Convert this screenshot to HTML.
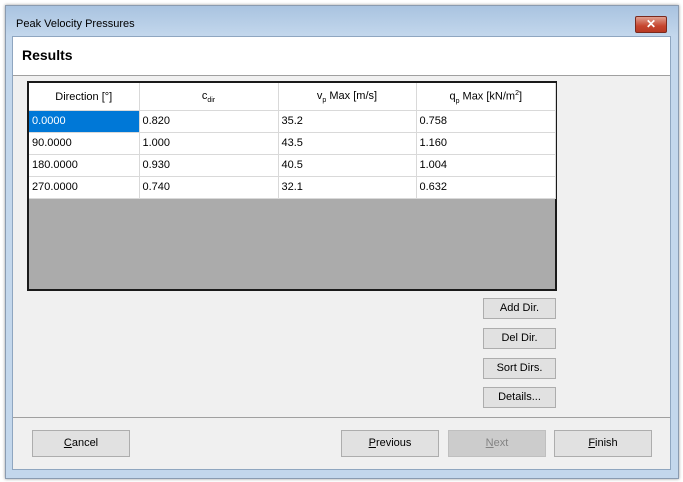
<!DOCTYPE html><html><head><style>
*{margin:0;padding:0;box-sizing:border-box}
body{width:683px;height:482px;background:#fff;font-family:"Liberation Sans",sans-serif;font-size:11px;position:relative;overflow:hidden}
.a{position:absolute}
.btn{position:absolute;background:#e1e1e1;border:1px solid #adadad;text-align:center;color:#000;font-size:11px}
td{border-right:1px solid #d9d9d9;border-bottom:1px solid #d9d9d9;padding:0 3px;height:22px;font-size:11px}
</style></head><body>
<div class="a" style="left:5px;top:5px;width:674px;height:474px;border:1px solid #8a9bb0;background:linear-gradient(#a9c3e0,#c3d7ec 30px,#c3d7ec);box-shadow:0 0 3px #999"></div>
<div class="a" style="left:16px;top:18px;font-size:11px;color:#000">Peak Velocity Pressures</div>
<div class="a" style="left:635px;top:16px;width:32px;height:17px;background:linear-gradient(#e0a090,#c6452e 60%,#b83a24);border:1px solid #7a2a1e;border-radius:2px;color:#fff;font-weight:bold;text-align:center;line-height:15px;font-size:12px">✕</div>
<div class="a" style="left:12px;top:36px;width:659px;height:434px;background:#f0f0f0;border:1px solid #8fa6c0"></div>
<div class="a" style="left:13px;top:37px;width:657px;height:39px;background:#fff;border-bottom:1px solid #a0a0a0"></div>
<div class="a" style="left:22px;top:47px;font-size:14px;font-weight:bold">Results</div>
<div class="a" style="left:27px;top:81px;width:530px;height:210px;background:#ababab;border:2px solid #1a1a1a"></div>
<table class="a" style="left:29px;top:83px;width:527px;border-collapse:collapse;background:#fff">
<tr style="height:27px;text-align:center"><td style="width:110px;height:27px;padding-top:2px">Direction [°]</td><td style="width:139px;padding-top:2px">c<sub style="font-size:7px">dir</sub></td><td style="width:138px;padding-top:2px">v<sub style="font-size:7px">p</sub> Max [m/s]</td><td style="padding-top:2px">q<sub style="font-size:7px">p</sub> Max [kN/m<sup style="font-size:7px">2</sup>]</td></tr>
<tr><td style="background:#0078d7;color:#fff">0.0000</td><td>0.820</td><td>35.2</td><td>0.758</td></tr>
<tr><td>90.0000</td><td>1.000</td><td>43.5</td><td>1.160</td></tr>
<tr><td>180.0000</td><td>0.930</td><td>40.5</td><td>1.004</td></tr>
<tr><td>270.0000</td><td>0.740</td><td>32.1</td><td>0.632</td></tr>
</table>
<div class="btn" style="left:483px;top:298px;width:73px;height:21px;line-height:19px">Add Dir.</div>
<div class="btn" style="left:483px;top:328px;width:73px;height:21px;line-height:19px">Del Dir.</div>
<div class="btn" style="left:483px;top:358px;width:73px;height:21px;line-height:19px">Sort Dirs.</div>
<div class="btn" style="left:483px;top:387px;width:73px;height:21px;line-height:19px">Details...</div>
<div class="a" style="left:13px;top:417px;width:657px;height:1px;background:#a0a0a0"></div>
<div class="btn" style="left:32px;top:430px;width:98px;height:27px;line-height:25px"><u>C</u>ancel</div>
<div class="btn" style="left:341px;top:430px;width:98px;height:27px;line-height:25px"><u>P</u>revious</div>
<div class="btn" style="left:448px;top:430px;width:98px;height:27px;line-height:25px;background:#cccccc;border-color:#bfbfbf;color:#838383"><u>N</u>ext</div>
<div class="btn" style="left:554px;top:430px;width:98px;height:27px;line-height:25px"><u>F</u>inish</div>
</body></html>
